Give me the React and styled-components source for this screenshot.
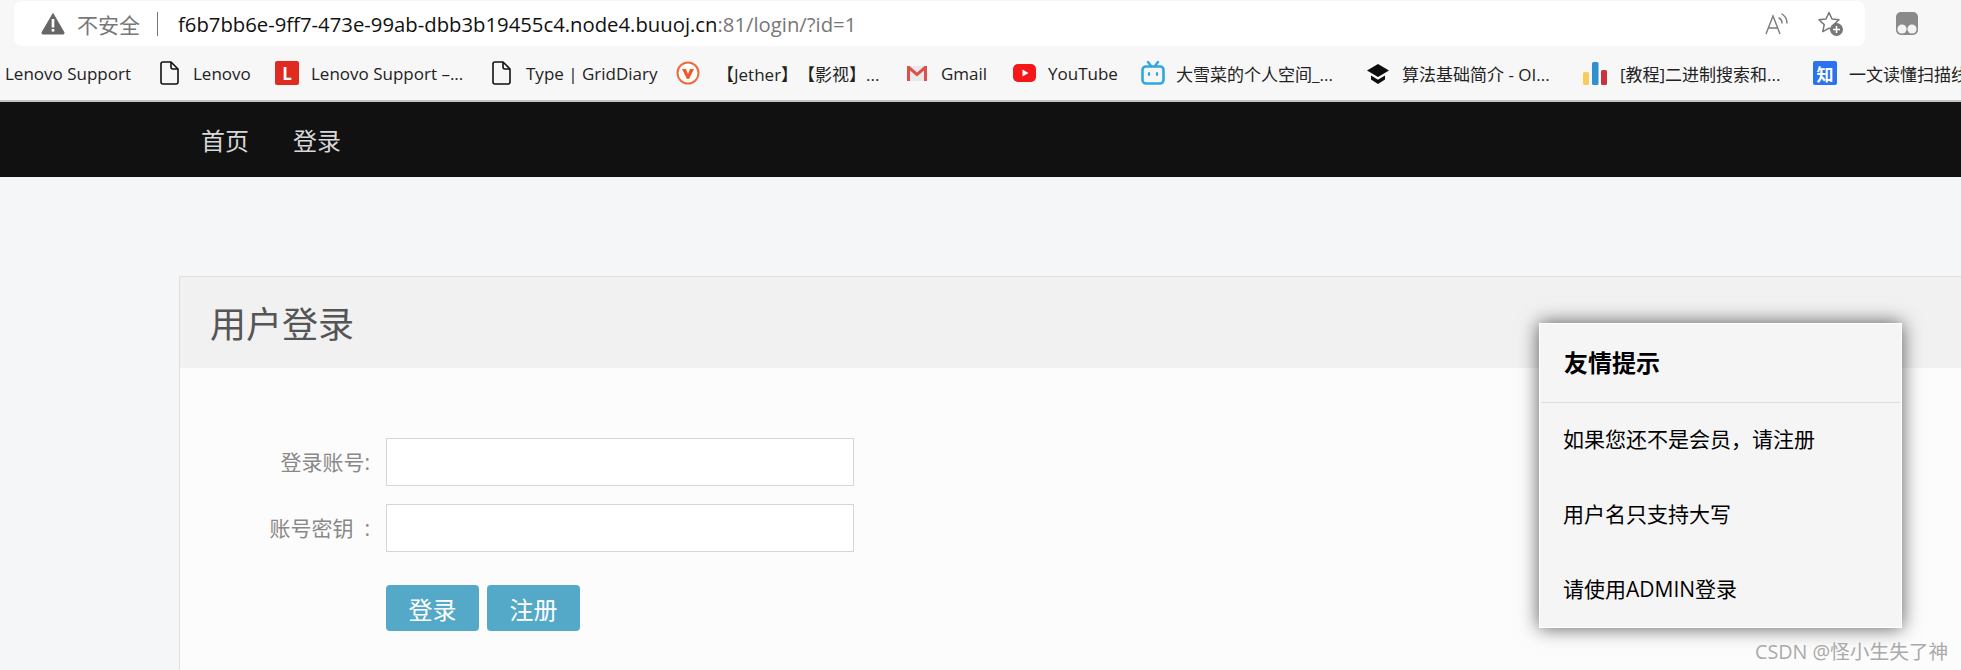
import styled, { createGlobalStyle } from 'styled-components'

const GlobalStyle = createGlobalStyle`
  html, body { margin: 0; padding: 0; background: #f5f6f8; }
  * { box-sizing: border-box; }
  body {
    font-family: "Open Sans", "Noto Sans CJK SC", sans-serif;
    text-spacing-trim: space-all;
  }
`

const DocIcon = () => (
  <svg width="19" height="24" viewBox="0 0 19 24" fill="none" stroke="#111" strokeWidth="1.6" strokeLinejoin="round">
    <path d="M3 1h8l7 7v13a2 2 0 0 1-2 2H3a2 2 0 0 1-2-2V3a2 2 0 0 1 2-2z" />
    <path d="M11 1v5a2 2 0 0 0 2 2h5" />
  </svg>
)

const VivaldiIcon = () => (
  <svg width="24" height="24" viewBox="0 0 24 24">
    <circle cx="12" cy="12" r="10.5" fill="#fff" stroke="#ef6a3c" strokeWidth="2" />
    <path d="M6 8h4l2 5 2-5h4l-5 10h-2z" fill="#ef5a26" />
  </svg>
)

const GmailIcon = () => (
  <svg width="24" height="24" viewBox="0 0 24 24">
    <path d="M2 5h20v15H2z" fill="#e9e9e9" />
    <path d="M2 20V5h2.5L12 11.5 19.500 5H22v15h-3V9.500l-7 6-7-6V20z" fill="#d9534a" />
  </svg>
)

const YoutubeIcon = () => (
  <svg width="23" height="24" viewBox="0 0 23 24">
    <rect x="0" y="3" width="23" height="18" rx="5" fill="#f5161a" />
    <path d="M9.500 8.500l6 3.500-6 3.500z" fill="#fff" />
  </svg>
)

const BiliIcon = () => (
  <svg width="24" height="24" viewBox="0 0 24 24" fill="none" stroke="#2fa7e0">
    <rect x="1.500" y="5.500" width="21" height="17" rx="3.500" strokeWidth="2.600" />
    <path d="M7 1l3 4M17 1l-3 4" strokeWidth="2.400" strokeLinecap="round" />
    <path d="M8 12v2M16 12v2" strokeWidth="2.200" strokeLinecap="round" />
  </svg>
)

const CapIcon = () => (
  <svg width="22" height="24" viewBox="0 0 22 24" fill="#0c0c0c">
    <path d="M11 3L0 9.500 11 16l11-6.500z" />
    <path d="M4 14.500v4L11 23l7-4.500v-4l-7 4.200z" />
  </svg>
)

const BarsIcon = () => (
  <svg width="24" height="24" viewBox="0 0 24 24">
    <rect x="0" y="11" width="6" height="13" rx="1.500" fill="#f6cc5a" />
    <rect x="9" y="1" width="6.500" height="23" rx="1.500" fill="#2f8fd0" />
    <rect x="18" y="9" width="6" height="15" rx="1.500" fill="#c9333a" />
  </svg>
)

const WarningIcon = () => (
  <svg width="24" height="23" viewBox="0 0 24 23">
    <path d="M12 1.500L23 20.500a1 1 0 0 1-1 1.500H2a1 1 0 0 1-1-1.500z" fill="#666" stroke="#666" strokeLinejoin="round" />
    <rect x="10.700" y="7" width="2.600" height="8.500" fill="#fff" />
    <rect x="10.700" y="17" width="2.600" height="2.600" fill="#fff" />
  </svg>
)

const ReadAloudIcon = () => (
  <svg width="24" height="22" viewBox="0 0 24 22" fill="none" stroke="#7c7c7c" strokeWidth="1.400">
    <path d="M1 21L8 3l7 18M3.500 15h9" />
    <path d="M14 5c2 1 3 3 3 5M17 1c3 2 5 5 5 9" strokeLinecap="round" />
  </svg>
)

const StarPlusIcon = () => (
  <svg width="25" height="25" viewBox="0 0 25 25">
    <path d="M11 1.500l3 6.500 7 .8-5.200 4.800 1.400 7-6.200-3.500L4.800 20.600l1.400-7L1 8.800 8 8z" fill="none" stroke="#777" strokeWidth="1.500" strokeLinejoin="round" />
    <circle cx="18.500" cy="18.500" r="6.500" fill="#777" />
    <path d="M18.500 15v7M15 18.500h7" stroke="#fff" strokeWidth="1.600" />
  </svg>
)

const TamperIcon = () => (
  <svg width="22" height="23" viewBox="0 0 22 23">
    <rect width="22" height="23" rx="5" fill="#8a8a8a" />
    <circle cx="6" cy="17" r="4.600" fill="#f4f4f4" />
    <circle cx="16" cy="17" r="4.600" fill="#f4f4f4" />
  </svg>
)

const tips = ['如果您还不是会员，请注册', '用户名只支持大写', '请使用ADMIN登录']

export default function App() {
  // width: from this icon to the next one, gap: icon to label
  const bookmarks = [
    { label: 'Lenovo Support', width: 155, gap: 0 },
    { label: 'Lenovo', width: 115, gap: 14, icon: <DocIcon /> },
    { label: 'Lenovo Support –...', width: 217, gap: 12, icon: <LetterBadge $bg="#e02b20">L</LetterBadge> },
    { label: 'Type | GridDiary', width: 184, gap: 15, icon: <DocIcon /> },
    { label: '【Jether】【影视】...', width: 229, gap: 17, icon: <VivaldiIcon /> },
    { label: 'Gmail', width: 108, gap: 12, icon: <GmailIcon /> },
    { label: 'YouTube', width: 128, gap: 12, icon: <YoutubeIcon /> },
    { label: '大雪菜的个人空间_...', width: 226, gap: 11, icon: <BiliIcon /> },
    { label: '算法基础简介 - OI...', width: 216, gap: 13, icon: <CapIcon /> },
    { label: '[教程]二进制搜索和...', width: 230, gap: 13, icon: <BarsIcon /> },
    { label: '一文读懂扫描线', width: 200, gap: 12, icon: <LetterBadge $bg="#2a72f0">知</LetterBadge> },
  ]

  return (
    <Page>
      <GlobalStyle />
      <BrowserChrome>
        <AddressBar>
          <WarningIcon />
          <Insecure>不安全</Insecure>
          <Separator />
          <Url>
            f6b7bb6e-9ff7-473e-99ab-dbb3b19455c4.node4.buuoj.cn<UrlRest>:81/login/?id=1</UrlRest>
          </Url>
          <BarActions>
            <ReadAloudIcon />
            <StarPlusIcon />
          </BarActions>
        </AddressBar>
        <ExtensionSlot>
          <TamperIcon />
        </ExtensionSlot>
      </BrowserChrome>
      <BookmarkBar>
        {bookmarks.map((b) => (
          <Bookmark key={b.label} $w={b.width} $gap={b.gap}>
            {b.icon}
            <BookmarkLabel>{b.label}</BookmarkLabel>
          </Bookmark>
        ))}
      </BookmarkBar>
      <NavBar>
        <NavLink>首页</NavLink>
        <NavLink>登录</NavLink>
      </NavBar>
      <Main>
        <Panel>
          <PanelHeader>用户登录</PanelHeader>
          <PanelBody>
            <FormRow>
              <FieldLabel>登录账号:</FieldLabel>
              <TextInput type="text" />
            </FormRow>
            <FormRow>
              <FieldLabel>账号密钥&nbsp;&nbsp;:</FieldLabel>
              <TextInput type="password" />
            </FormRow>
            <Actions>
              <SubmitButton>登录</SubmitButton>
              <SubmitButton>注册</SubmitButton>
            </Actions>
          </PanelBody>
        </Panel>
      </Main>
      <TipBox>
        <TipTitle>友情提示</TipTitle>
        <TipList>
          {tips.map((t) => (
            <TipItem key={t}>{t}</TipItem>
          ))}
        </TipList>
      </TipBox>
      <Watermark>CSDN @怪小生失了神</Watermark>
    </Page>
  )
}

const Page = styled.div`
  position: relative;
  width: 1961px;
  height: 670px;
  overflow: hidden;
  background: #f5f6f8;
`

const BrowserChrome = styled.div`
  display: flex;
  align-items: flex-start;
  height: 46px;
  padding: 1px 0 0 14px;
  background: #f7f7f7;
`

const AddressBar = styled.div`
  display: flex;
  align-items: center;
  width: 1851px;
  height: 45px;
  padding: 0 22px 0 27px;
  background: #fff;
  border-radius: 8px;
`

const Insecure = styled.span`
  margin-left: 12px;
  font-size: 21px;
  color: #777;
`

const Separator = styled.span`
  width: 1px;
  height: 24px;
  margin: 0 20px 0 17px;
  background: #777;
`

const Url = styled.span`
  font-size: 20.3px;
  color: #111;
  white-space: nowrap;
`

const UrlRest = styled.span`
  color: #777;
`

const BarActions = styled.div`
  display: flex;
  align-items: center;
  gap: 29px;
  margin-left: auto;
`

const ExtensionSlot = styled.div`
  display: flex;
  align-items: center;
  height: 45px;
  margin-left: 31px;
`

const BookmarkBar = styled.div`
  display: flex;
  align-items: center;
  height: 56px;
  padding: 0 0 0 5px;
  background: #f7f7f7;
  border-bottom: 2px solid #c4c4c4;
  overflow: hidden;
`

const Bookmark = styled.div`
  display: flex;
  flex: none;
  align-items: center;
  gap: ${(p) => p.$gap}px;
  width: ${(p) => p.$w}px;
`

const BookmarkLabel = styled.span`
  font-size: 17px;
  color: #222;
  white-space: nowrap;
`

const LetterBadge = styled.span`
  display: flex;
  align-items: center;
  justify-content: center;
  width: 24px;
  height: 24px;
  border-radius: 2px;
  background: ${(p) => p.$bg};
  color: #fff;
  font-size: 17px;
  font-weight: 700;
`

const NavBar = styled.nav`
  display: flex;
  align-items: center;
  gap: 44px;
  height: 75px;
  padding-left: 201px;
  background: #111;
`

const NavLink = styled.a`
  font-size: 24px;
  color: #d8d8d8;
`

const Main = styled.main`
  padding: 99px 0 0 179px;
`

const Panel = styled.section`
  height: 400px;
  background: #fcfcfc;
  border-top: 1px solid #e0e0e0;
  border-left: 1px solid #e0e0e0;
`

const PanelHeader = styled.h2`
  display: flex;
  align-items: center;
  height: 91px;
  margin: 0;
  padding-left: 30px;
  background: #f1f1f1;
  font-size: 36px;
  font-weight: 400;
  color: #555;
`

const PanelBody = styled.div`
  padding-top: 70px;
`

const FormRow = styled.div`
  display: flex;
  align-items: center;
  height: 48px;
  margin-bottom: 18px;
`

const FieldLabel = styled.label`
  width: 190px;
  padding-bottom: 2px;
  font-size: 21px;
  color: #888;
  text-align: right;
  white-space: nowrap;
`

const TextInput = styled.input`
  width: 468px;
  height: 48px;
  margin-left: 16px;
  background: #fff;
  border: 1px solid #d6d6d6;
  outline: none;
`

const Actions = styled.div`
  display: flex;
  gap: 8px;
  margin: 33px 0 0 206px;
`

const SubmitButton = styled.button`
  width: 93px;
  height: 46px;
  padding: 0;
  background: #53a9c7;
  border: none;
  border-radius: 4px;
  color: #fff;
  font-family: inherit;
  font-size: 24px;
`

const TipBox = styled.aside`
  position: absolute;
  top: 323px;
  left: 1539px;
  width: 363px;
  height: 305px;
  background: #f5f5f5;
  border: 1px solid #fff;
  box-shadow: 0 0 18px rgba(0, 0, 0, 0.65);
  color: #000;
`

const TipTitle = styled.h3`
  display: flex;
  align-items: center;
  height: 79px;
  margin: 0 1px;
  padding: 0 0 3px 23px;
  border-bottom: 1px solid #ddd;
  font-size: 24px;
  font-weight: 700;
`

const TipList = styled.ul`
  display: flex;
  flex-direction: column;
  gap: 33px;
  margin: 0;
  padding: 18px 0 0 23px;
  list-style: none;
`

const TipItem = styled.li`
  height: 42px;
  font-size: 21px;
  line-height: 36px;
`

const Watermark = styled.span`
  position: absolute;
  top: 636px;
  left: 1755px;
  font-size: 19.7px;
  color: #aaa;
  white-space: nowrap;
`
